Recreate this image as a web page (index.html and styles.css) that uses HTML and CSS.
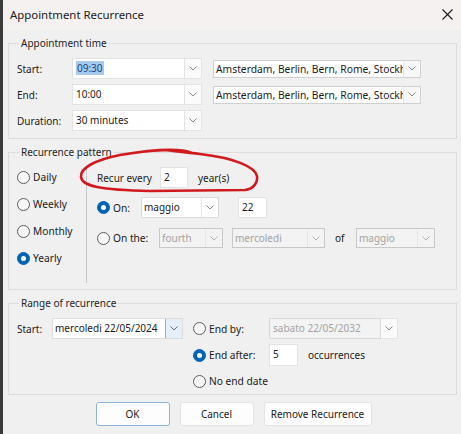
FILE: index.html
```html
<!DOCTYPE html>
<html>
<head>
<meta charset="utf-8">
<link rel="stylesheet" href="styles.css">
</head>
<body>
<div class="window">
  <div class="titlebar">
    <span class="title">Appointment Recurrence</span>
    <svg class="close" width="11" height="11" viewBox="0 0 11 11"><path d="M0.5 0.5 L10.5 10.5 M10.5 0.5 L0.5 10.5" stroke="#1a1a1a" stroke-width="1.1" fill="none"/></svg>
  </div>
  <div class="content">
    <fieldset class="group g-time">
      <legend>Appointment time</legend>
      <div class="trow">
        <span class="lbl w55">Start:</span>
        <div class="spin">
          <div class="box w113"><span class="sel">09:30</span></div>
          <div class="sbtn"><svg width="8" height="5" viewBox="0 0 8 5"><path d="M0.5 0.5 L4 4 L7.5 0.5" stroke="#8a8a8a" fill="none"/></svg></div>
        </div>
        <div class="combo tz"><span class="ctext">Amsterdam, Berlin, Bern, Rome, Stockholm, Vienna</span><span class="carrow"><svg width="8" height="5" viewBox="0 0 8 5"><path d="M0.5 0.5 L4 4 L7.5 0.5" stroke="#8a8a8a" fill="none"/></svg></span></div>
      </div>
      <div class="trow">
        <span class="lbl w55">End:</span>
        <div class="spin">
          <div class="box w113">10:00</div>
          <div class="sbtn"><svg width="8" height="5" viewBox="0 0 8 5"><path d="M0.5 0.5 L4 4 L7.5 0.5" stroke="#8a8a8a" fill="none"/></svg></div>
        </div>
        <div class="combo tz"><span class="ctext">Amsterdam, Berlin, Bern, Rome, Stockholm, Vienna</span><span class="carrow"><svg width="8" height="5" viewBox="0 0 8 5"><path d="M0.5 0.5 L4 4 L7.5 0.5" stroke="#8a8a8a" fill="none"/></svg></span></div>
      </div>
      <div class="trow">
        <span class="lbl w55">Duration:</span>
        <div class="spin">
          <div class="box w113">30 minutes</div>
          <div class="sbtn"><svg width="8" height="5" viewBox="0 0 8 5"><path d="M0.5 0.5 L4 4 L7.5 0.5" stroke="#8a8a8a" fill="none"/></svg></div>
        </div>
      </div>
    </fieldset>

    <fieldset class="group g-pattern">
      <legend>Recurrence pattern</legend>
      <div class="pattern">
        <div class="freq">
          <label class="opt"><span class="radio"></span>Daily</label>
          <label class="opt"><span class="radio"></span>Weekly</label>
          <label class="opt"><span class="radio"></span>Monthly</label>
          <label class="opt"><span class="radio on"></span>Yearly</label>
        </div>
        <div class="detail">
          <div class="prow r-every">
            <span class="lbl w63">Recur every</span>
            <div class="box w28">2</div>
            <span class="lbl ml10">year(s)</span>
          </div>
          <div class="prow r-on">
            <label class="opt w44"><span class="radio on"></span>On:</label>
            <div class="combo w78"><span class="ctext">maggio</span><span class="carrow sep"><svg width="8" height="5" viewBox="0 0 8 5"><path d="M0.5 0.5 L4 4 L7.5 0.5" stroke="#8a8a8a" fill="none"/></svg></span></div>
            <div class="box w29 ml19">22</div>
          </div>
          <div class="prow r-onthe">
            <label class="opt w62"><span class="radio"></span>On the:</label>
            <div class="combo dis w64"><span class="ctext">fourth</span><span class="carrow sep"><svg width="8" height="5" viewBox="0 0 8 5"><path d="M0.5 0.5 L4 4 L7.5 0.5" stroke="#b0b0b0" fill="none"/></svg></span></div>
            <div class="combo dis w93 ml9"><span class="ctext">mercoledi</span><span class="carrow sep"><svg width="8" height="5" viewBox="0 0 8 5"><path d="M0.5 0.5 L4 4 L7.5 0.5" stroke="#b0b0b0" fill="none"/></svg></span></div>
            <span class="lbl of">of</span>
            <div class="combo dis w79"><span class="ctext">maggio</span><span class="carrow sep"><svg width="8" height="5" viewBox="0 0 8 5"><path d="M0.5 0.5 L4 4 L7.5 0.5" stroke="#b0b0b0" fill="none"/></svg></span></div>
          </div>
        </div>
      </div>
    </fieldset>

    <fieldset class="group g-range">
      <legend>Range of recurrence</legend>
      <div class="range">
        <div class="rstart">
          <span class="lbl w35">Start:</span>
          <div class="combo date"><span class="ctext">mercoledi 22/05/2024</span><span class="carrow focus"><svg width="8" height="5" viewBox="0 0 8 5"><path d="M0.5 0.5 L4 4 L7.5 0.5" stroke="#6a6a6a" fill="none"/></svg></span></div>
        </div>
        <div class="ends">
          <div class="erow e1">
            <label class="opt w76"><span class="radio"></span>End by:</label>
            <div class="spin">
              <div class="box dis w112">sabato 22/05/2032</div>
              <div class="sbtn"><svg width="8" height="5" viewBox="0 0 8 5"><path d="M0.5 0.5 L4 4 L7.5 0.5" stroke="#8a8a8a" fill="none"/></svg></div>
            </div>
          </div>
          <div class="erow e2">
            <label class="opt w76"><span class="radio on"></span>End after:</label>
            <div class="box w29">5</div>
            <span class="lbl ml10">occurrences</span>
          </div>
          <div class="erow e3">
            <label class="opt"><span class="radio"></span>No end date</label>
          </div>
        </div>
      </div>
    </fieldset>

    <div class="buttons">
      <button class="btn default w74">OK</button>
      <button class="btn w74">Cancel</button>
      <button class="btn w108">Remove Recurrence</button>
    </div>
  </div>

  <svg class="annot" width="461" height="434" viewBox="0 0 461 434">
    <path d="M192 153 C180 148, 150 150, 120 155 C95 160, 80 168, 81 177 C82 186, 100 190, 150 191 L245 190 C254 189, 258 182, 257 176 C255 167, 235 158, 200 154 C185 152, 172 151, 165 150" stroke="#d11a1d" stroke-width="2.6" fill="none" stroke-linecap="round"/>
  </svg>
</div>
</body>
</html>
```

FILE: styles.css
```css
* { box-sizing: border-box; }

body {
  margin: 0;
  width: 461px;
  height: 434px;
  overflow: hidden;
  background: #f0f0f0;
  font-family: "Noto Sans", "Open Sans", sans-serif;
  font-size: 10px;
  color: #1b1b1b;
}

.window {
  position: relative;
  height: 434px;
  border-left: 3px solid #3b3b3b;
  display: flex;
  flex-direction: column;
}

.titlebar {
  height: 30px;
  background: #f4f1f0;
  display: flex;
  align-items: center;
  justify-content: space-between;
  padding: 0 8px 2px 7px;
}

.title {
  font-size: 11.4px;
  color: #1a1a1a;
}

.content {
  padding: 0 4px 0 5px;
  display: flex;
  flex-direction: column;
}

.group {
  margin: 5px 0 0 0;
  border: 1px solid #dcdcdc;
  min-width: 0;
}

.group legend {
  padding: 0 2px;
  margin-left: 2px;
  line-height: 16px;
  height: 16px;
  color: #1f1f1f;
}

.g-time { padding: 7px 8px 7px 8px; display: flex; flex-direction: column; gap: 5px; }
.g-pattern { padding: 7px 8px 6px 8px; }
.g-range { padding: 7px 8px 3px 8px; }

.trow { display: flex; align-items: center; height: 21px; }

.lbl { white-space: nowrap; }
.w35 { width: 35px; }
.w55 { width: 55px; }
.w63 { width: 63px; }
.ml10 { margin-left: 10px; }
.ml19 { margin-left: 19px; }
.ml9 { margin-left: 9px; }

.spin { display: flex; height: 21px; }

.box {
  height: 21px;
  background: #ffffff;
  border: 1px solid #e2e2e2;
  padding: 1px 3px 0 3px;
  line-height: 16px;
  white-space: nowrap;
  overflow: hidden;
}
.box.dis { background: #f3f3f3; color: #a3a3a3; border-color: #d8d8d8; }

.w28 { width: 28px; }
.w29 { width: 29px; }
.w44 { width: 44px; }
.w62 { width: 62px; }
.w64 { width: 64px; }
.w76 { width: 76px; }
.w78 { width: 78px; }
.w79 { width: 79px; }
.w93 { width: 93px; }
.w112 { width: 112px; }
.w113 { width: 113px; }
.w74 { width: 74px; }
.w108 { width: 108px; }

.sel { background: #a7cbee; color: #1c4480; padding: 0 1px; }

.sbtn {
  width: 17px;
  height: 21px;
  background: #fbfbfb;
  border: 1px solid #e4e4e4;
  border-left: none;
  display: flex;
  align-items: center;
  justify-content: center;
}

.combo {
  height: 21px;
  display: flex;
  background: #ffffff;
  border: 1px solid #dadada;
  overflow: hidden;
}
.combo .ctext {
  flex: 1;
  min-width: 0;
  padding: 1px 3px 0 2px;
  line-height: 16px;
  white-space: nowrap;
  overflow: hidden;
}
.combo .carrow {
  width: 17px;
  flex: none;
  display: flex;
  align-items: center;
  justify-content: center;
  background: #fbfbfb;
}
.combo .carrow.sep { border-left: 1px solid #e8e8e8; background: #ffffff; }

.combo.tz { width: 208px; height: 18px; margin-left: 11px; border-color: #d0d0d0; }
.combo.tz .ctext { padding: 0 0 0 2px; line-height: 16px; text-overflow: clip; font-size: 10.3px; }
.combo.tz .carrow { border-left: 1px solid #e8e8e8; background: #f7f7f7; }

.combo.dis { background: #f3f3f3; border-color: #c8c8c8; height: 20px; }
.combo.dis .ctext { color: #a2a2a2; }
.combo.dis .carrow.sep { background: #f3f3f3; border-left-color: #e6e6e6; }

.combo.date { width: 131px; border-color: #dcdcdc; }
.combo .carrow.focus { width: 18px; background: #e4effa; border: 1px solid #7fb1e3; margin: -1px -1px -1px 0; }

/* radio */
.opt { display: flex; align-items: center; white-space: nowrap; }
.radio {
  width: 13px;
  height: 13px;
  border-radius: 50%;
  border: 1px solid #5e5e5e;
  background: #f7f7f7;
  margin-right: 3px;
  flex: none;
  position: relative;
}
.radio.on {
  background: #0063b8;
  border-color: #0063b8;
}
.radio.on::after {
  content: "";
  position: absolute;
  left: 3px;
  top: 3px;
  width: 5px;
  height: 5px;
  border-radius: 50%;
  background: #ffffff;
}

/* pattern */
.pattern { display: flex; height: 116px; }
.freq {
  width: 69px;
  display: flex;
  flex-direction: column;
  gap: 7px;
}
.freq .opt { height: 20px; font-size: 10.2px; }
.detail {
  border-left: 1px solid #c9c9c9;
  padding-left: 10px;
  display: flex;
  flex-direction: column;
}
.prow { display: flex; align-items: center; }
.r-every { height: 21px; }
.r-on { height: 21px; margin-top: 9px; }
.r-onthe { height: 20px; margin-top: 10px; }
.r-on .opt, .r-onthe .opt { font-size: 10.2px; }
.of { margin-left: 10px; width: 21px; }

/* range */
.range { display: flex; }
.rstart { display: flex; align-items: center; height: 21px; }
.ends { margin-left: 10px; display: flex; flex-direction: column; }
.erow { display: flex; align-items: center; }
.e1 { height: 21px; }
.e2 { height: 22px; margin-top: 5px; }
.e2 .box { height: 22px; }
.e3 { height: 20px; margin-top: 5px; }
.ends .opt { font-size: 10.2px; }

/* buttons */
.buttons {
  display: flex;
  justify-content: center;
  gap: 10px;
  margin-top: 7px;
  padding-left: 2px;
}
.btn {
  height: 24px;
  background: #fdfdfd;
  border: 1px solid #e3e3e3;
  border-radius: 3px;
  font-family: inherit;
  font-size: 10px;
  color: #1b1b1b;
  padding: 0;
}
.btn.default { border-color: #8db4dd; }

.annot {
  position: absolute;
  left: -3px;
  top: 0;
  pointer-events: none;
}
```
